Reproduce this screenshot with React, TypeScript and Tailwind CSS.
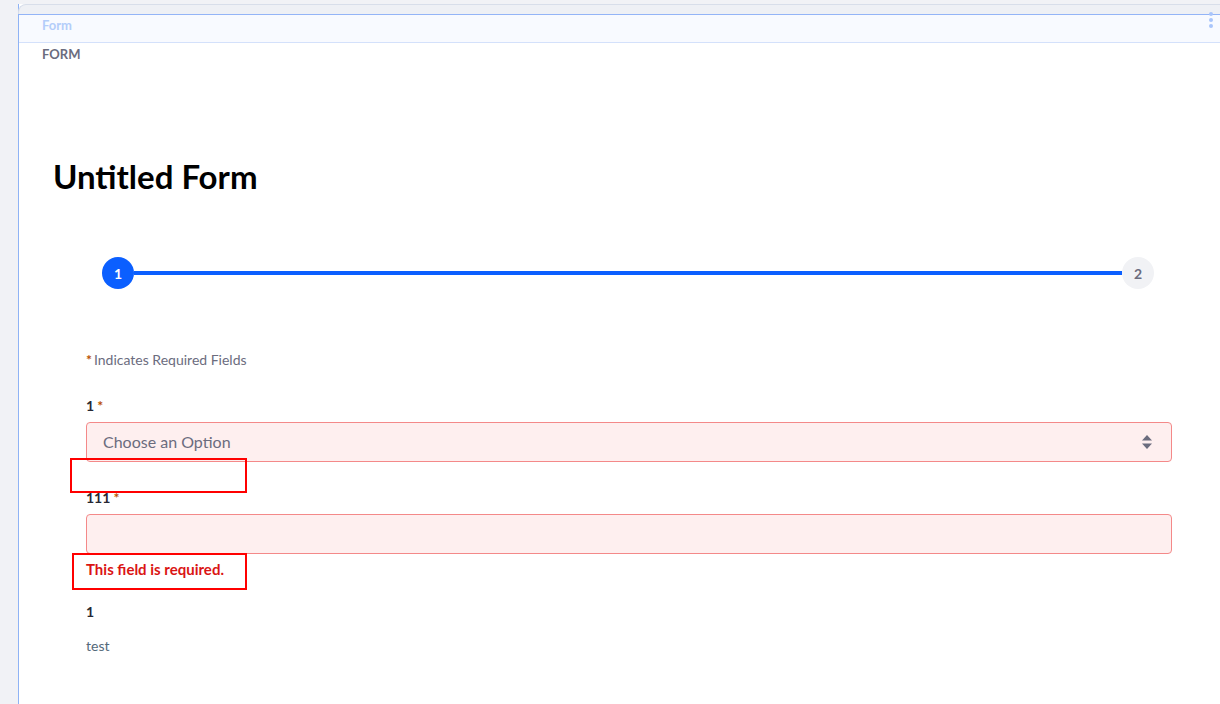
import { useState } from 'react';

const font = { fontFamily: 'Lato, "Noto Sans", sans-serif' };

const Asterisk = () => <span className="text-[#b95000] font-bold ml-[3px]">*</span>;

const SelectArrows = () => (
  <svg width="12" height="16" viewBox="0 0 12 16" className="absolute right-[19px] top-1/2 -translate-y-1/2 pointer-events-none">
    <path d="M6 1 L11 6.5 H1 Z" fill="#6b6c7e" />
    <path d="M6 15 L11 9.5 H1 Z" fill="#6b6c7e" />
  </svg>
);

const App = () => {
  const [value, setValue] = useState('');
  const [text, setText] = useState('');

  return (
    <div className="min-h-screen bg-[#f1f2f6] pt-[4px] pl-[18px] overflow-hidden" style={font}>
      <div className="bg-white min-h-[700px] border-l border-[#8fb3f5]">
        <div className="h-[10px] bg-[#eef0f5] rounded-tl-lg border-t border-[#d8deea] -ml-px border-l"></div>
        <div className="relative h-[29px] bg-[#f8faff] border-t border-[#93b4f7] border-b border-b-[#d4e1fb] pl-[23px] pt-[1px]">
          <div className="text-[13px] font-bold text-[#b3cdfa] leading-[18px]">Form</div>
          <div className="absolute right-[7px] top-[-3px] flex flex-col gap-[2px]">
            <span className="w-[4px] h-[4px] rounded-full bg-[#a9c5fb]"></span>
            <span className="w-[4px] h-[4px] rounded-full bg-[#a9c5fb]"></span>
            <span className="w-[4px] h-[4px] rounded-full bg-[#a9c5fb]"></span>
          </div>
        </div>

        <div className="pl-[23px] pt-[1px] text-[13px] font-bold text-[#6b6c7e] leading-[20px]">FORM</div>

        <div className="pl-[35px] pr-[48px]">
          <h1 className="mt-[92px] -ml-px text-[33px] font-bold text-black leading-[40px]">Untitled Form</h1>

          <div className="pl-[32px]">
            <div className="mt-[61px] flex items-center pl-[16px] pr-[18px]">
              <div className="w-[32px] h-[32px] rounded-full bg-[#0b5fff] text-white text-[14px] font-bold flex items-center justify-center shrink-0">1</div>
              <div className="flex-1 h-[4px] bg-[#0b5fff]"></div>
              <div className="w-[32px] h-[32px] rounded-full bg-[#f1f2f5] text-[#6b6c7e] text-[14px] font-bold flex items-center justify-center shrink-0">2</div>
            </div>

            <p className="mt-[61px] text-[14px] text-[#6b6c7e] leading-[20px]">
              <span className="text-[#b95000] font-bold mr-[2px]">*</span>Indicates Required Fields
            </p>

            <label className="block mt-[26px] text-[14px] font-bold text-[#272833] leading-[20px]">
              1<Asterisk />
            </label>
            <div className="relative mt-[6px]">
              <select
                value={value}
                onChange={(e) => setValue(e.target.value)}
                className="w-full h-[40px] appearance-none bg-[#feefef] border border-[#f48989] rounded-[4px] pl-[16px] text-[16px] text-[#6b6c7e] outline-none"
              >
                <option value="">Choose an Option</option>
                <option value="a">Option 1</option>
              </select>
              <SelectArrows />
              <div className="absolute left-[-16px] top-[36px] w-[177px] h-[35px] border-2 border-[#ff0000] pointer-events-none"></div>
            </div>

            <label className="block mt-[26px] text-[14px] font-bold text-[#272833] leading-[20px]">
              111<Asterisk />
            </label>
            <input
              value={text}
              onChange={(e) => setText(e.target.value)}
              className="mt-[6px] w-full h-[40px] bg-[#feefef] border border-[#f48989] rounded-[4px] px-[16px] outline-none block"
            />
            <div className="relative mt-[5px] text-[15px] font-bold text-[#da1414] leading-[20px]">
              This field is required.
              <div className="absolute left-[-14px] top-[-6px] w-[175px] h-[37px] border-2 border-[#ff0000] pointer-events-none"></div>
            </div>

            <div className="mt-[23px] text-[14px] font-bold text-[#272833] leading-[20px]">1</div>
            <div className="mt-[14px] text-[14px] text-[#54697a] leading-[20px]">test</div>
          </div>
        </div>
      </div>
    </div>
  );
};

export default App;
